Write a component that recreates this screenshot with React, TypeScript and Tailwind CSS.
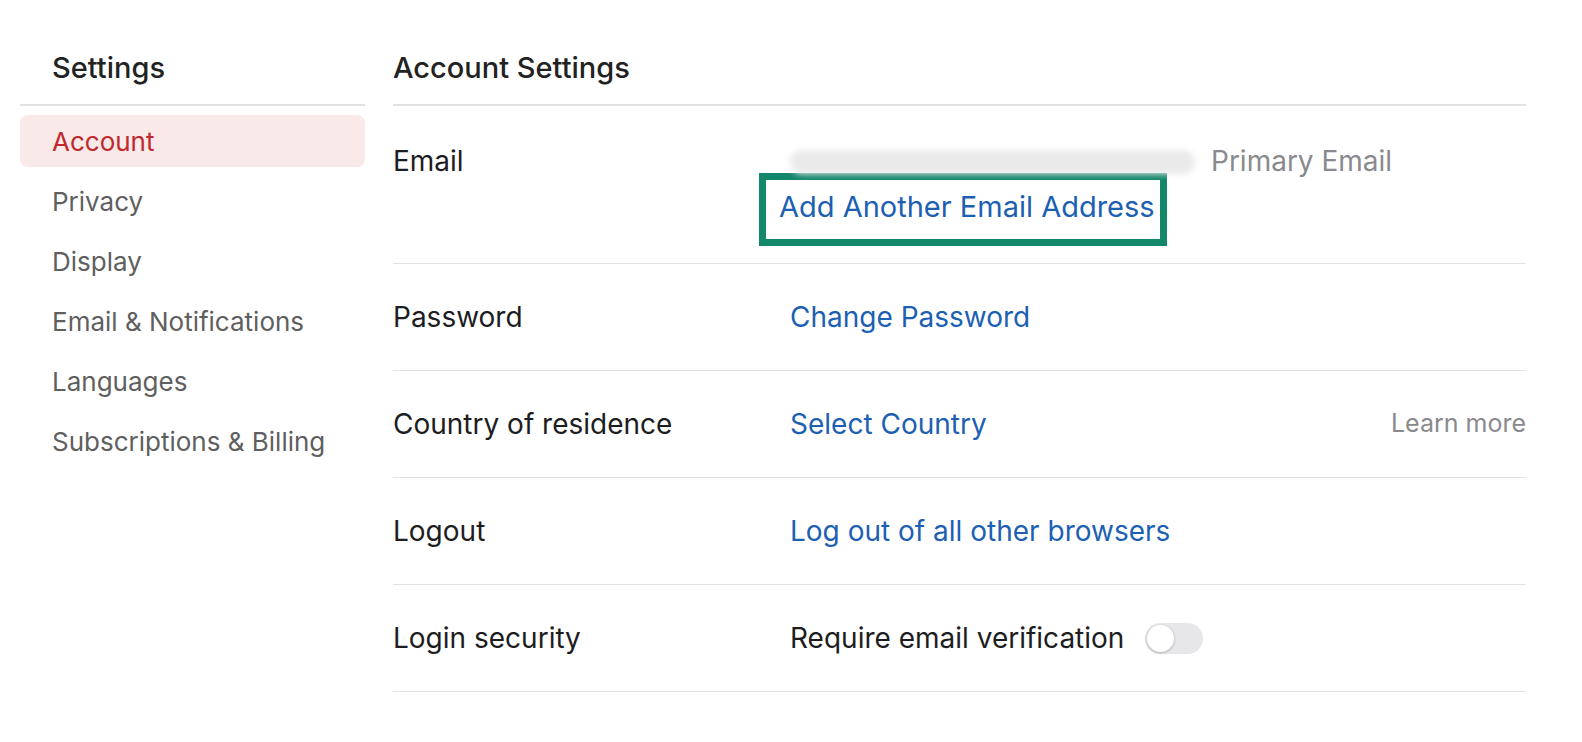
import React from 'react';

const navItems = [
  'Account',
  'Privacy',
  'Display',
  'Email & Notifications',
  'Languages',
  'Subscriptions & Billing',
];

const Toggle = () => (
  <div className="ml-[21px] h-[31px] w-[58px] rounded-full bg-[#e7e7ea] p-[2px]">
    <div className="h-[27px] w-[27px] rounded-full bg-white shadow-[0_1px_3px_rgba(0,0,0,0.25)]" />
  </div>
);

const Row = ({ label, children, right }: { label: string; children: React.ReactNode; right?: React.ReactNode }) => (
  <div className="flex items-center border-b border-[#e2e2e2] h-[107px]">
    <div className="w-[397px] shrink-0">{label}</div>
    <div className="flex flex-1 items-center">{children}</div>
    {right}
  </div>
);

export default function App() {
  return (
    <div
      className="flex min-h-[742px] bg-white text-[28px] text-[#1d1d1f]"
      style={{ fontFamily: 'Inter, "Noto Sans", sans-serif' }}
    >
      <aside className="ml-[20px] w-[345px] shrink-0 pt-[50px]">
        <h2 className="px-[32px] pb-[18px] text-[29px] font-medium leading-[36px] text-[#222]">Settings</h2>
        <div className="border-t-2 border-[#e2e2e2]" />
        <nav className="mt-[9px] flex flex-col">
          {navItems.map((item, i) =>
            i === 0 ? (
              <div
                key={item}
                className="flex h-[52px] items-center rounded-[8px] bg-[#f9e9e9] px-[32px] text-[26px] text-[#c0282d]"
              >
                {item}
              </div>
            ) : (
              <div key={item} className="flex h-[60px] items-center px-[32px] pt-[8px] text-[26px] text-[#5f5f5f]">
                {item}
              </div>
            )
          )}
        </nav>
      </aside>

      <main className="ml-[28px] mr-[56px] flex-1 pt-[50px]">
        <h1 className="pb-[18px] text-[29px] font-medium leading-[36px] text-[#222]">Account Settings</h1>
        <div className="border-t-2 border-[#e2e2e2]" />

        <div className="flex h-[158px] border-b border-[#e2e2e2] pt-[38px]">
          <div className="w-[397px] shrink-0 leading-[34px]">Email</div>
          <div className="flex flex-col">
            <div className="flex items-center">
              <div className="relative h-[34px] w-[405px]">
                <div className="absolute left-0 top-[6px] h-[24px] w-[405px] rounded-full bg-[#eaeaea] blur-[3px]" />
              </div>
              <span className="ml-[16px] leading-[34px] text-[#8a8a8e]">Primary Email</span>
            </div>
            <div className="-ml-[31px] -mt-[5px] w-[408px] border-[7px] border-[#12876a] bg-white pb-[15px] pl-[13px] pt-[10px] text-[29px] leading-[34px] whitespace-nowrap">
              <span className="text-[#1c5fb3]">Add Another Email Address</span>
            </div>
          </div>
        </div>

        <Row label="Password">
          <span className="text-[#1c5fb3]">Change Password</span>
        </Row>
        <Row label="Country of residence" right={<span className="text-[25px] text-[#8a8a8e]">Learn more</span>}>
          <span className="text-[#1c5fb3]">Select Country</span>
        </Row>
        <Row label="Logout">
          <span className="text-[#1c5fb3]">Log out of all other browsers</span>
        </Row>
        <Row label="Login security">
          <span>Require email verification</span>
          <Toggle />
        </Row>
      </main>
    </div>
  );
}
